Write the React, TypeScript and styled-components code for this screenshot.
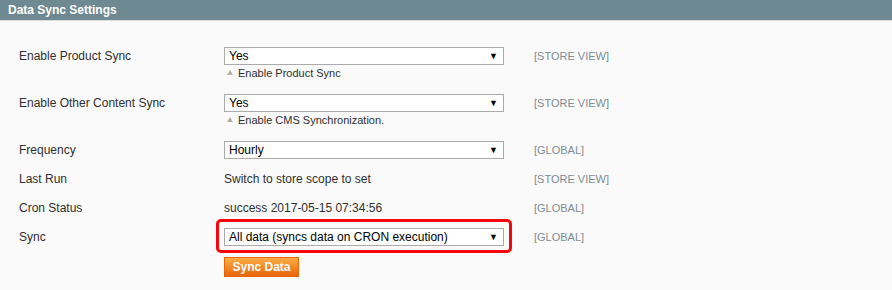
import styled, {createGlobalStyle} from "styled-components";

const GlobalStyle = createGlobalStyle`
    html, body {
        margin: 0;
        padding: 0;
        background: #fafafa;
    }

    body {
        font-family: "Liberation Sans", Arial, sans-serif;
        font-size: 12px;
        color: #2f2f2f;
    }
`

type Row = {
    label: string
    scope: string
    select?: string
    text?: string
    note?: string
    highlight?: boolean
    action?: string
}

const rows: Row[] = [
    {label: 'Enable Product Sync', select: 'Yes', note: 'Enable Product Sync', scope: '[STORE VIEW]'},
    {label: 'Enable Other Content Sync', select: 'Yes', note: 'Enable CMS Synchronization.', scope: '[STORE VIEW]'},
    {label: 'Frequency', select: 'Hourly', scope: '[GLOBAL]'},
    {label: 'Last Run', text: 'Switch to store scope to set', scope: '[STORE VIEW]'},
    {label: 'Cron Status', text: 'success 2017-05-15 07:34:56', scope: '[GLOBAL]'},
    {
        label: 'Sync',
        select: 'All data (syncs data on CRON execution)',
        scope: '[GLOBAL]',
        highlight: true,
        action: 'Sync Data'
    },
]

export default function App() {
    return (
        <>
            <GlobalStyle/>
            <Section>
                <Head>Data Sync Settings</Head>
                <Fieldset>
                    <FormList>
                        {rows.map((row) => (
                            <FormRow key={row.label}>
                                <Label>{row.label}</Label>
                                <Value>
                                    {row.select && (
                                        <Highlight $on={!!row.highlight}>
                                            <SelectBox>
                                                <span>{row.select}</span>
                                                <Caret>▼</Caret>
                                            </SelectBox>
                                        </Highlight>
                                    )}
                                    {row.text && <PlainValue>{row.text}</PlainValue>}
                                    {row.note && <Note>{row.note}</Note>}
                                    {row.action && <SyncButton type="button">{row.action}</SyncButton>}
                                </Value>
                                <Scope>{row.scope}</Scope>
                            </FormRow>
                        ))}
                    </FormList>
                </Fieldset>
            </Section>
        </>
    );
}

const Section = styled.section`
    width: 892px;
    height: 290px;
    background: #fafafa;
`

const Head = styled.h4`
    margin: 0;
    height: 20px;
    line-height: 20px;
    padding: 0 8px;
    background: #6f8992;
    border-bottom: 1px solid #d9dcdd;
    color: #fff;
    font-size: 12px;
    font-weight: 700;
`

const Fieldset = styled.div`
    padding: 20px 0 0 19px;
`

const FormList = styled.div`
    display: flex;
    flex-direction: column;
`

const FormRow = styled.div`
    display: grid;
    grid-template-columns: 205px 280px auto;
    padding: 6px 0 5px;
`

const Label = styled.div`
    line-height: 18px;
    color: #2f2f2f;
`

const Value = styled.div`
    display: flex;
    flex-direction: column;
    align-items: flex-start;
`

const Highlight = styled.div<{ $on: boolean }>`
    position: relative;
    width: 100%;

    &::after {
        content: '';
        display: ${p => p.$on ? 'block' : 'none'};
        position: absolute;
        top: -9px;
        left: -8px;
        right: -8px;
        bottom: -7px;
        border: 3px solid #f5050c;
        border-radius: 5px;
        pointer-events: none;
    }
`

const SelectBox = styled.div`
    box-sizing: border-box;
    display: flex;
    align-items: center;
    justify-content: space-between;
    width: 280px;
    height: 18px;
    padding: 0 4px 0 4px;
    background: #fff;
    border: 1px solid #aaaaaa;
    color: #000;
    font-size: 12px;
`

const Caret = styled.span`
    font-size: 9px;
    line-height: 1;
    margin-right: 1px;
    color: #000;
`

const PlainValue = styled.div`
    line-height: 18px;
`

const Note = styled.div`
    position: relative;
    margin: 1px 0 3px;
    padding-left: 14px;
    line-height: 14px;
    font-size: 11px;
    color: #2f2f2f;

    &::before {
        content: '';
        position: absolute;
        left: 3px;
        top: 4px;
        border-left: 3px solid transparent;
        border-right: 3px solid transparent;
        border-bottom: 5px solid #b0b0b0;
    }
`

const SyncButton = styled.button`
    margin-top: 11px;
    height: 20px;
    width: 75px;
    padding: 0;
    border: 1px solid #ed6502;
    background: linear-gradient(to bottom, #ffac47 0%, #f38d29 45%, #e8660c 100%);
    color: #fff;
    font-family: "Liberation Sans", Arial, sans-serif;
    font-size: 12px;
    font-weight: 700;
    cursor: pointer;
`

const Scope = styled.div`
    margin-left: 30px;
    line-height: 18px;
    font-size: 11px;
    color: #7f8c94;
`
